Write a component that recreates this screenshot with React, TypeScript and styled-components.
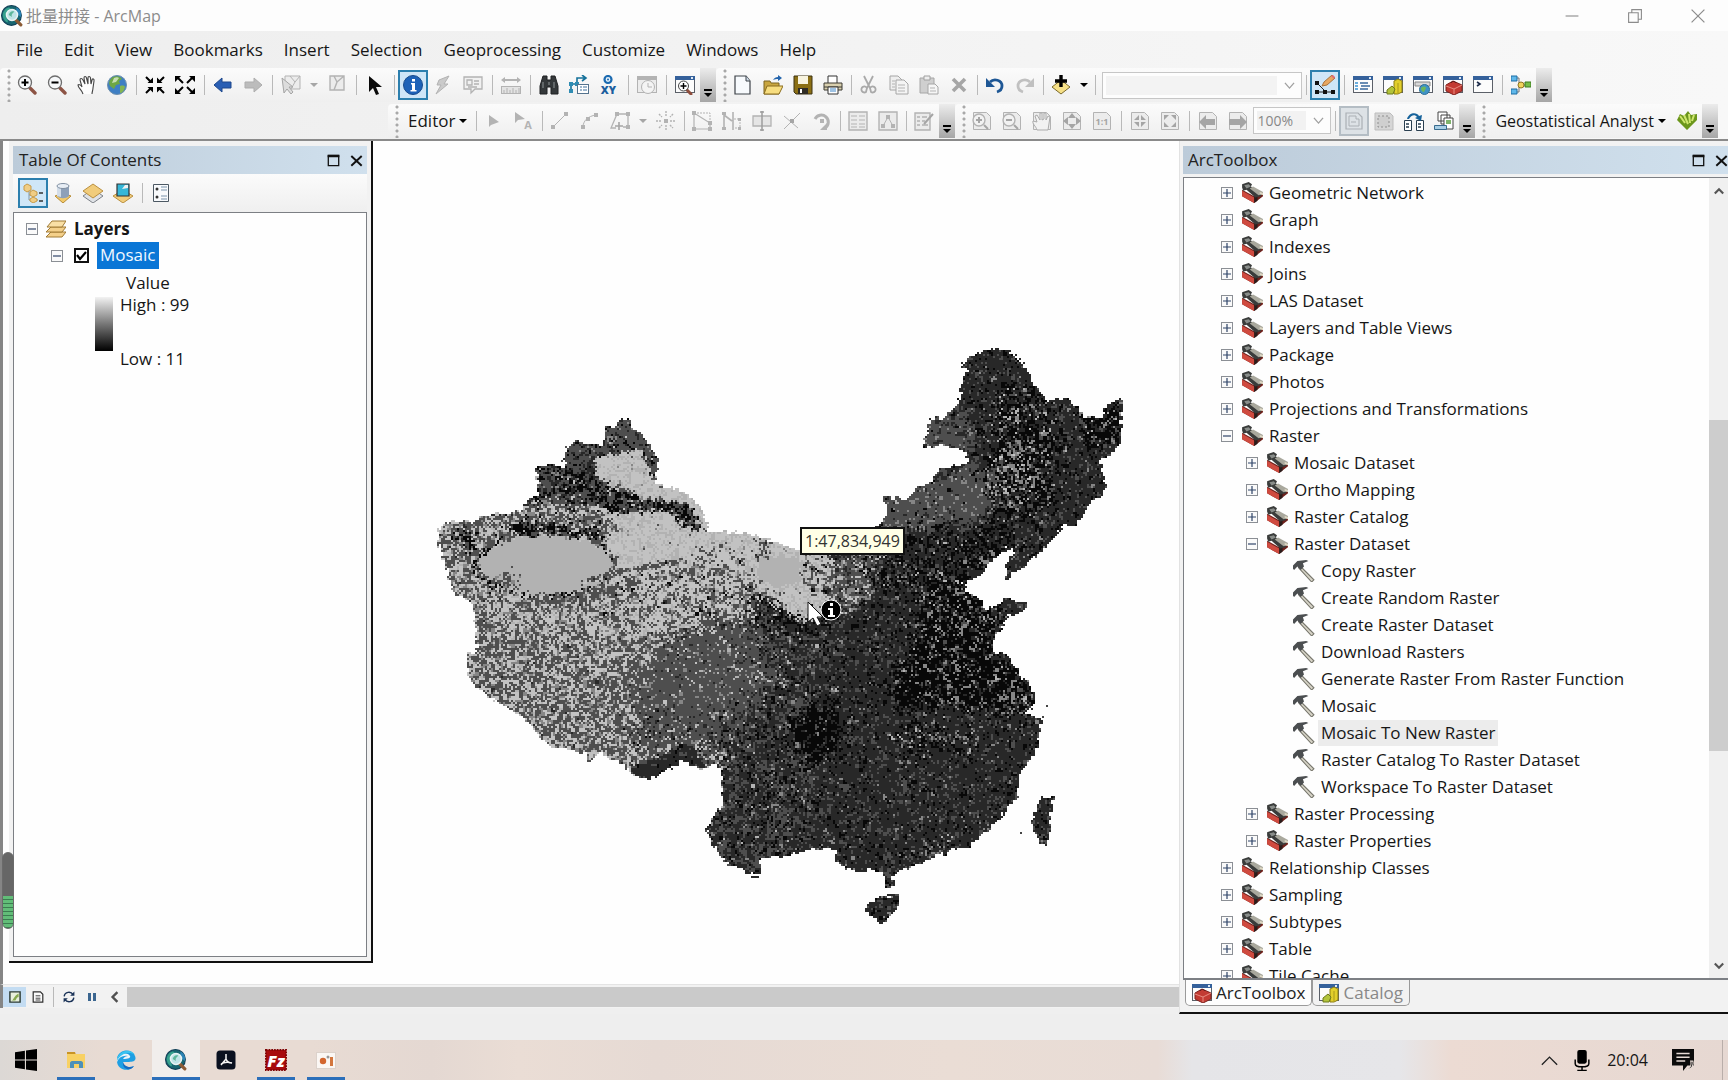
import React from 'react';
import styled, { createGlobalStyle, css } from 'styled-components';

const GlobalStyle = createGlobalStyle`
  *, *::before, *::after { box-sizing: border-box; }
  html, body { margin: 0; padding: 0; }
  body {
    font-family: 'Open Sans', 'Noto Sans', 'Noto Sans CJK SC', sans-serif;
    font-size: 17px;
    line-height: 24px;
    color: #161616;
    background: #efefef;
  }
  button, input, select { font: inherit; color: inherit; }
  button { background: none; border: 0; padding: 0; margin: 0; cursor: default; }
  ul { list-style: none; margin: 0; padding: 0; }
  svg { display: block; flex: none; }
`;

/* ---------- icons ---------- */

const G = '#b3b3b3';

const page = (
  <path d="M3 2h10l4 4v12H3z" fill="#ececec" stroke={G} />
);
const pageWide = (
  <path d="M1.500 1.500h13l4 4v13h-17z" fill="#ececec" stroke={G} />
);
const windowFrame = (
  <>
    <rect x="0.5" y="1.5" width="19" height="16" fill="#fcfcfc" stroke="#5b6068" />
    <rect x="0" y="1" width="20" height="4" fill="#35619b" />
    <path d="M16 2h2v2h-2z" fill="#dfe9f5" />
  </>
);
const lens = (
  <>
    <path d="M13 13l5 5" stroke="#8d5445" strokeWidth="3.4" strokeLinecap="round" />
    <circle cx="8" cy="7.500" r="6.500" fill="#f6f8fa" stroke="#6d6d6d" strokeWidth="1.300" />
  </>
);
const globeLens = (
  <>
    <circle cx="9.500" cy="9.500" r="9" fill="#17656f" stroke="#123f56" />
    <path d="M3 5c3-4 6-3 6-1s-4 3-4 6 2 4 1 6C2 14 0 9 3 5z" fill="#36a08d" />
    <path d="M14 2c4 2 5 6 4 9l-4-3z" fill="#2b83b5" />
    <path d="M13 13l5 5" stroke="#8b5a34" strokeWidth="3" strokeLinecap="round" />
    <circle cx="10" cy="9" r="5" fill="#bfe4e6" stroke="#e9f4f4" strokeWidth="1.400" />
    <path d="M7 9c1-3 3-4 5-3-1 2-3 2-2 5z" fill="#5db79a" />
  </>
);

const icons: Record<string, React.ReactNode> = {
  arcmap: globeLens,
  zoomIn: <>{lens}<path d="M8 4v7M4.500 7.500h7" stroke="#000" strokeWidth="2" /></>,
  zoomOut: <>{lens}<path d="M4.500 7.500h7" stroke="#000" strokeWidth="2" /></>,
  hand: (
    <path d="M6 19c-1-4-5-6-5-9 1-1 3 0 4 2L3 5c0-2 2-2 3 0l2 4-1-6c0-2 2-2 2.500 0l1.500 6V3c0-2 2-2 2.500 0l.5 6 1-4c.5-2 2.500-1 2 1l-1 7c0 2-1 4-1 6" fill="#fdfdfd" stroke="#444" strokeWidth="1.100" />
  ),
  globe: (
    <>
      <circle cx="10" cy="10" r="9.500" fill="#3e7fc4" stroke="#6d8fae" />
      <path d="M6 2c5-2 8 0 9 2l-3 2 1 3-4 1-2 4-4-3c-2-4 0-7 3-9z" fill="#6ea743" />
      <path d="M13 11c3-1 5 0 5 1-1 4-3 6-5 6z" fill="#84b552" />
      <path d="M7 3c2-1 4-1 5 0L9 7 5 8z" fill="#dceccf" opacity=".8" />
    </>
  ),
  zoomInFixed: (
    <>
      <path d="M1 2l5 5M19 2l-5 5M1 18l5-5M19 18l-5-5" stroke="#000" strokeWidth="2" />
      <path d="M8 8H2.500L8 2.500zM12 8h5.500L12 2.500zM8 12H2.500L8 17.500zM12 12h5.500L12 17.500z" />
    </>
  ),
  zoomOutFixed: (
    <>
      <path d="M3 3l5 5M17 3l-5 5M3 17l5-5M17 17l-5-5" stroke="#000" strokeWidth="2" />
      <path d="M0 1h6L0 7zM20 1h-6l6 6zM0 19h6l-6-6zM20 19h-6l6-6z" />
    </>
  ),
  back: <path d="M1 10l8-7v4h9v6H9v4z" fill="#2a5fb4" stroke="#1e488c" />,
  forward: <path d="M19 10l-8-7v4H2v6h9v4z" fill="#bcbcbc" stroke="#adadad" />,
  selectFeatures: (
    <>
      <path d="M4 1h15v13H4zM9 1l5 6-4 7M14 7l5-6" fill="#ececec" stroke={G} />
      <path d="M1 3l2 15 3-4 4 5 2-2-4-5h4z" fill="#dcdcdc" stroke="#a5a5a5" />
    </>
  ),
  clearSelection: <path d="M3 1h14v14H3zM7 1l3 6-3 8M10 7l7-6" fill="#ececec" stroke={G} strokeWidth="1.400" />,
  pointer: <path d="M4 1v16l4-4 3 7 3-1-3-7h6z" fill="#0a0a0a" />,
  info: (
    <>
      <circle cx="10" cy="10" r="9.500" fill="#1d62b8" stroke="#184b8c" />
      <path d="M9 4h3v2.500H9zM8 8h4v7h1.500v1.500H7.500V15H9V9.500H8z" fill="#fff" />
    </>
  ),
  lightning: <path d="M16 1L6 5 4 10h4l-5 9L15 9h-4z" fill="#cacaca" stroke={G} />,
  popup: (
    <>
      <path d="M1 2h18v12h-7l-4 4v-4H1z" fill="#f1f1f1" stroke={G} strokeWidth="1.300" />
      <path d="M4 5h5v5H4zM11 6h5M11 9h5M5 12h9" fill="none" stroke={G} strokeWidth="1.300" />
    </>
  ),
  measure: (
    <>
      <path d="M0 5l4-3v2h12V2l4 3-4 3V6H4v2z" fill={G} />
      <rect x="0.500" y="11.500" width="19" height="7" fill="#e3e3e3" stroke={G} />
      <path d="M3 15v4M6 13v6M9 15v4M12 13v6M15 15v4M18 13v6" stroke={G} />
    </>
  ),
  find: (
    <>
      <path d="M4 1h4v4h4V1h4l3 10v8h-7v-7H8v7H1v-8z" fill="#34383a" stroke="#1f2123" />
      <path d="M4 7v6M15 7v6M10 7v3" stroke="#8d9496" />
    </>
  ),
  route: (
    <>
      <path d="M2 16V9h6V3h8M13 0l4 3-4 3M2 9h4" fill="none" stroke="#15719a" strokeWidth="1.600" />
      <path d="M0 7h4v4H0zM6 7h4v4H6zM0 14h4v4H0z" fill="#2f8cb3" />
      <rect x="8.500" y="9.500" width="11" height="9" fill="#fff" stroke="#55738e" />
      <path d="M11 12h2M14 12h4M11 15h2M14 15h4" stroke="#3d6e9b" />
    </>
  ),
  goXY: (
    <>
      <circle cx="9" cy="4.500" r="3.500" fill="#e7f1fa" stroke="#1b6ab0" strokeWidth="2.200" />
      <circle cx="9" cy="4.500" r="1" fill="#1b6ab0" />
      <text x="9.500" y="19" textAnchor="middle" fontFamily="Open Sans" fontWeight="800" fontSize="11" fill="#1c5e9e">XY</text>
    </>
  ),
  time: (
    <>
      <rect x="0.500" y="1.500" width="19" height="16" fill="#ececec" stroke={G} />
      <path d="M0 1h20v4H0z" fill={G} />
      <circle cx="11" cy="12" r="6.500" fill="#f4f4f4" stroke={G} />
      <path d="M11 8v4h4" fill="none" stroke={G} />
    </>
  ),
  viewer: (
    <>
      {windowFrame}
      <path d="M12 15l4 4" stroke="#8e4d3c" strokeWidth="3" strokeLinecap="round" />
      <circle cx="8.500" cy="11" r="5" fill="#fff" stroke="#454545" />
      <path d="M8.500 8v6M5.500 11h6" stroke="#000" strokeWidth="1.400" />
    </>
  ),
  newDoc: <><path d="M2 1h11l4 5v13H2z" fill="#f7fafd" stroke="#3c4248" strokeWidth="1.200" /><path d="M13 1v5h4" fill="#cfdbe8" stroke="#3c4248" /></>,
  open: (
    <>
      <path d="M1 6h6l1 2h8v11H1z" fill="#c9a640" stroke="#7c6420" />
      <path d="M4 11h16l-4 8H1z" fill="#f7dd7f" stroke="#8a6d1e" />
      <path d="M10 5c1-2 3-3 5-3V0l4 3-4 3V4c-2 0-3 0-5 1z" fill="#2364ac" />
    </>
  ),
  save: (
    <>
      <path d="M1 1h18v18H3l-2-2z" fill="#8b6f14" stroke="#3c3312" />
      <path d="M5 1h10v8H5z" fill="#f7f3df" />
      <path d="M5 13h10v6H5z" fill="#2f2c25" />
      <path d="M7 14h2v4H7z" fill="#fff" />
    </>
  ),
  print: (
    <>
      <path d="M5 1h9v8H5z" fill="#fff" stroke="#333" />
      <path d="M1 8h18v7H1z" fill="#d8cfae" stroke="#3c3a32" />
      <path d="M1 12h18" stroke="#3c3a32" />
      <path d="M5 12h10v7H5z" fill="#fff" stroke="#333" />
      <path d="M7 14h6M7 16h6" stroke="#3f86c8" />
    </>
  ),
  cut: <path d="M5 1l6 12M14 1L8 13M8 13a3 3 0 1 0-1 4zM11 13a3 3 0 1 1 1 4z" fill="none" stroke="#a9a9a9" strokeWidth="1.800" />,
  copy: <><path d="M1 1h8l4 4v10H1z" fill="#efefef" stroke="#a6a6a6" /><path d="M7 5h8l4 4v10H7z" fill="#f4f4f4" stroke="#a6a6a6" /><path d="M9 10h7M9 13h7M9 16h7M3 6h3M3 9h3M3 12h3" stroke={G} /></>,
  paste: <><path d="M1 3h14v15H1z" fill="#cfcfcf" stroke="#a6a6a6" /><path d="M5 1h6v4H5z" fill="#eee" stroke="#a0a0a0" /><path d="M9 9h7l3 3v7H9z" fill="#f6f6f6" stroke="#a6a6a6" /><path d="M11 13h5M11 16h6" stroke={G} /></>,
  remove: <path d="M4 4l12 12M16 4L4 16" stroke="#a6a6a6" strokeWidth="3.600" />,
  undo: (
    <>
      <path d="M5 7c4-4 12-2 12 4 0 3-2 5-5 6" fill="none" stroke="#1e5795" strokeWidth="2.800" />
      <path d="M1 3v9h9z" fill="#1e5795" />
    </>
  ),
  redo: (
    <>
      <path d="M15 7C11 3 3 5 3 11c0 3 2 5 5 6" fill="none" stroke="#c0c0c0" strokeWidth="2.800" />
      <path d="M19 3v9h-9z" fill="#c0c0c0" />
    </>
  ),
  addData: (
    <>
      <path d="M10 5l9 7-9 7-9-7z" fill="#f6e087" stroke="#7a692c" />
      <path d="M10 0v12M4 6h12" stroke="#000" strokeWidth="3.400" />
    </>
  ),
  editorBar: (
    <>
      <path d="M2 8l10 10M2 17h16" fill="none" stroke="#222" strokeWidth="1" />
      <path d="M0 6h4v4H0zM0 15h4v4H0zM8 15h4v4H8zM16 15h4v4h-4z" fill="#111" />
      <path d="M7 11l2-4 8-7 3 3-8 7z" fill="#e8a862" stroke="#a8733c" />
      <path d="M16 1l2-1 2 2-1 2z" fill="#e36d73" />
    </>
  ),
  tocWin: <>{windowFrame}<path d="M2 8h3M2 11h3M2 14h3" stroke="#3c94d2" strokeWidth="1.600" /><path d="M7 8h8M8 11h9M7 14h8" stroke="#37679c" strokeWidth="1.600" /></>,
  catalogWin: (
    <>
      {windowFrame}
      <path d="M11 6l4-2 4 2v11l-4 2h-4z" fill="#e2cf2b" stroke="#8b7d15" />
      <path d="M15 8v10" stroke="#a9981d" />
      <path d="M4 15l5-4 3 3-2 5H4z" fill="#b2c43b" stroke="#6e7a1c" />
    </>
  ),
  searchWin: <>{windowFrame}<path d="M2 7h15v4H2z" fill="#d8d8d8" stroke="#888" /><circle cx="11.500" cy="14.500" r="5" fill="#3f93c6" stroke="#2c6f97" /><path d="M8 13c3-3 5-1 5 0l-2 4c-2 0-3-2-3-4z" fill="#6fb65a" /></>,
  toolboxWin: <>{windowFrame}<path d="M3 10l7-4 9 4v6l-8 4-8-4z" fill="#c33b33" stroke="#7d221e" /><path d="M3 11l8 3 8-4M11 14v5" fill="none" stroke="#e88b80" /><path d="M8 8c1-2 4-2 5 0" fill="none" stroke="#571916" /></>,
  pythonWin: <>{windowFrame}<path d="M4 7l3 2-3 2" fill="none" stroke="#1d2b4a" strokeWidth="1.600" /></>,
  model: (
    <>
      <path d="M5 3h3v14H5M8 10h8" fill="none" stroke="#777" />
      <path d="M0 1h6v5H0zM0 14h6v5H0z" fill="#5fb8ea" stroke="#1c6ca3" />
      <circle cx="10" cy="10" r="3" fill="#f0d35c" stroke="#907522" />
      <path d="M14 7h6v5h-6z" fill="#75bd48" stroke="#3d7a20" />
    </>
  ),
  editTool: <path d="M5 4v12l2-2 8-3z" fill={G} />,
  editAnno: <><path d="M1 1v11l3-3 7-1z" fill={G} /><text x="14" y="18" textAnchor="middle" fontFamily="Open Sans" fontWeight="700" fontSize="11" fill={G}>A</text></>,
  line: <><path d="M3 16L16 3" stroke={G} /><path d="M1 14h4v4H1zM14 1h4v4h-4z" fill={G} /></>,
  arc: <><path d="M3 16c0-6 5-11 13-12" fill="none" stroke={G} /><path d="M1 14h4v4H1zM6 6h4v4H6zM14 2h4v4h-4z" fill={G} /></>,
  trace: <><path d="M7 3h11v13M7 3L1 17h5M13 16h5" fill="none" stroke={G} strokeWidth="1.300" /><path d="M5 1h4v4H5zM16 1h4v4h-4zM16 14h4v4h-4z" fill={G} /><path d="M9 11v8M5 15h8" stroke="#a5a5a5" strokeWidth="1.600" /></>,
  pointTool: <><path d="M8 8h4v4H8z" fill={G} /><path d="M10 0v6M10 14v6M0 10h6M14 10h6M3 3l3 3M14 14l3 3M17 3l-3 3M3 17l3-3" stroke={G} strokeWidth="1.400" strokeDasharray="2 1" /></>,
  editVertices: <><path d="M2 2v16h16V12L2 2" fill="none" stroke={G} strokeWidth="1.200" /><path d="M2 2h16v10" fill="none" stroke={G} strokeDasharray="2 1" /><path d="M0 0h4v4H0zM0 16h4v4H0zM16 16h4v4h-4zM16 10h4v4h-4z" fill={G} /></>,
  reshape: <><path d="M2 2v16M2 4l8 6M11 1v18" fill="none" stroke={G} strokeWidth="1.600" /><path d="M0 1h4v3H0zM0 16h4v3H0zM16 7h3v3h-3zM16 16h3v3h-3z" fill={G} /><path d="M12 8h6v9h-6" fill="none" stroke={G} strokeDasharray="2 1" /></>,
  cutPoly: <><path d="M1 5h18v10H1z" fill="#e5e5e5" stroke={G} strokeWidth="1.300" /><path d="M10 0v20M8 1h4M8 19h4" stroke="#9d9d9d" strokeWidth="1.500" /></>,
  split: <><path d="M2 18L18 2M2 5l14 12" stroke={G} /><path d="M8 8h4v4H8z" fill="#a5a5a5" /></>,
  rotate: <><path d="M3 8a7 7 0 1 1 10 9" fill="none" stroke={G} strokeWidth="3" /><path d="M15 12v7H8z" fill={G} /><path d="M8 8h4v4H8z" fill={G} /></>,
  attributes: <><path d="M1 1h18v18H1z" fill="#ebebeb" stroke={G} strokeWidth="1.400" /><path d="M3 5h6M3 9h6M3 13h6M3 16h6M11 5h6M11 9h6M11 13h6M11 16h6" stroke={G} /></>,
  sketchProps: <><path d="M1 1h18v18H1z" fill="#ebebeb" stroke={G} strokeWidth="1.400" /><path d="M5 15l5-9 5 9" fill="none" stroke={G} /><path d="M3 13h4v4H3zM8 4h4v4H8zM13 13h4v4h-4z" fill={G} /></>,
  createFeatures: <><path d="M1 2h15v17H1z" fill="#ebebeb" stroke={G} strokeWidth="1.400" /><path d="M3 6h3M3 10h3M3 14h3M8 6h5M8 10h3M8 14h6" stroke={G} strokeWidth="1.600" /><path d="M10 13l9-10" stroke="#a5a5a5" strokeWidth="2" /></>,
  pageZoomIn: <>{pageWide}<circle cx="7" cy="9" r="6" fill="#f2f2f2" stroke={G} strokeWidth="1.400" /><path d="M7 6v6M4 9h6M12 14l4 4" stroke="#a5a5a5" strokeWidth="2" /></>,
  pageZoomOut: <>{pageWide}<circle cx="7" cy="9" r="6" fill="#f2f2f2" stroke={G} strokeWidth="1.400" /><path d="M4 9h6M12 14l4 4" stroke="#a5a5a5" strokeWidth="2" /></>,
  pagePan: <>{pageWide}<path d="M5 19c-1-4-5-6-4-9l4 1-2-6 2-1 3 5V2h2v7l2-1V2h2v7l2-4 2 1-2 13z" fill="#f2f2f2" stroke="#ababab" /></>,
  pageFull: <>{pageWide}<path d="M10 2l4 5H6zM10 18l4-5H6zM1 10l5-4v8zM19 10l-5-4v8z" fill="#a5a5a5" /></>,
  pageOne: <>{pageWide}<text x="10" y="14" textAnchor="middle" fontFamily="Open Sans" fontWeight="700" fontSize="9" fill="#a5a5a5">1:1</text></>,
  pageIn: <>{pageWide}<path d="M9 9H4l5-5zM11 9h5l-5-5zM9 11H4l5 5zM11 11h5l-5 5z" fill="#a5a5a5" /></>,
  pageOut: <>{pageWide}<path d="M4 4h5L4 9zM16 4h-5l5 5zM4 16h5l-5-5zM16 16h-5l5-5z" fill="#a5a5a5" /></>,
  pageBack: <>{pageWide}<path d="M1 11l7-7v4h9v6H8v4z" fill="#a5a5a5" /></>,
  pageForward: <>{pageWide}<path d="M19 11l-7-7v4H1v6h11v4z" fill="#a5a5a5" /></>,
  draft: <><path d="M2 2h12l4 4v12H2z" fill="#dde2e6" stroke="#abb0b5" strokeWidth="1.200" /><path d="M5 5h7v3h3v7H5zM7 11h5" fill="none" stroke="#abb0b5" /></>,
  focus: <><path d="M1 2h15l3 3v14H1z" fill="#d6d6d6" stroke="#bdbdbd" /><path d="M4 5h11v11H4z" fill="#cfcfcf" stroke="#8f8f8f" strokeDasharray="2 2" /></>,
  changeLayout: (
    <>
      <path d="M0.500 9.500h7v10h-7zM12.500 9.500h7v10h-7z" fill="#fff" stroke="#2a3f50" />
      <path d="M2 13h3M2 16h3M14 13h3M14 16h3" stroke="#2a3f50" strokeWidth="1.500" />
      <path d="M3 8c2-7 10-7 12-3l3-1-1 6-6-3 2-1c-2-3-6-2-8 2z" fill="#17639b" />
    </>
  ),
  dataDriven: (
    <>
      <path d="M4 1h9v9H4zM7 4h9v9H7z" fill="#fff" stroke="#444" />
      <path d="M10 7h9v11h-9z" fill="#fff" stroke="#444" />
      <path d="M12 9h5v4h-5z" fill="#7fb36c" />
      <path d="M0.500 14.500h12v4h-12z" fill="#a9cfe6" stroke="#386b8d" />
    </>
  ),
  geostat: <><path d="M10 19L0 9l3-6 4 2 4-5 3 4 6-1v6z" fill="#6b961b" /><path d="M3 5l5 7M7 4l4 9M12 3l1 9M17 4l-2 6" fill="none" stroke="#cfe66d" strokeWidth="2" /></>,
  listDrawing: (
    <>
      <path d="M6 8v9h9M6 12h4" fill="none" stroke="#8297a6" />
      <path d="M4 1l4 2v4L4 9 1 7V3z" fill="#f0cd85" stroke="#c79a48" />
      <path d="M10 7l4 2v3l-4 2-3-2V9zM10 14l4 2v2l-4 2-3-2v-2z" fill="#f0cd85" stroke="#c79a48" />
      <path d="M16 10h4M16 18h4" stroke="#333" strokeWidth="1.500" />
    </>
  ),
  listSource: <><path d="M2 13l8-3 8 3-8 7z" fill="#f2c96a" stroke="#b78c37" /><path d="M4 3h12v10c-3 3-9 3-12 0z" fill="#8da0b8" /><path d="M4 3h4v11l-4-1z" fill="#d3dde8" /><ellipse cx="10" cy="3" rx="6" ry="2.500" fill="#e8eef5" stroke="#7f8ea0" /></>,
  listVisible: <><path d="M0 13l10-7 10 7-10 7z" fill="#dfe2e6" stroke="#7c8188" /><path d="M0 8l10-7 10 7-10 7z" fill="#f1cc7b" stroke="#b98f3f" /></>,
  listSelection: <><path d="M0 13l10-6 10 6-10 7z" fill="#f1cc7b" stroke="#b98f3f" /><path d="M4 1h12v12H4z" fill="#35b7d8" stroke="#333" strokeWidth="1.200" /><path d="M9 6l3-4h3v3z" fill="#f1f1f1" /></>,
  options: <><path d="M2.500 1.500h15v17h-15z" fill="#f8fafc" stroke="#4c5863" /><circle cx="6" cy="6" r="1.500" fill="#333" /><circle cx="6" cy="14" r="1.500" fill="#333" /><path d="M10 4h6M10 7h6M10 13h6M10 16h6" stroke="#7b93ab" /></>,
  layers: (
    <>
      <path d="M0 18l5-5h15l-4 5z" fill="#f4d08a" stroke="#a07a35" />
      <path d="M0 13l5-5h15l-4 5z" fill="#f4d08a" stroke="#a07a35" />
      <path d="M1 8l5-6h14l-4 6z" fill="#f9dfa5" stroke="#a07a35" />
    </>
  ),
  toolset: (
    <>
      <path d="M1 7l11 6 8-3v3l-8 6L1 13z" fill="#6f211c" />
      <path d="M1 8l11 6v5L1 13z" fill="#cf4a3f" />
      <path d="M12 12l3-1v6l-3 2z" fill="#2b1c1a" />
      <path d="M1 2l6-2 3 2-1 2 10 6-1 3-5 1L5 7 2 8 1 5z" fill="#3a3c3b" />
      <path d="M3 3l4-1 2 2-4 2z" fill="#898d8a" />
      <path d="M8 6l3-2 9 5v2l-4 1z" fill="#a9a89d" />
      <path d="M17 9l3 1v2l-3-1z" fill="#ded8c4" />
    </>
  ),
  tool: (
    <>
      <path d="M6 5l13 13-2 2L5 7z" fill="#d8d5c8" stroke="#77766c" />
      <path d="M0 5l4-4 8-1 2 1-5 2 1 3-3 3-3-3-3 3-1-1z" fill="#4b4e50" />
    </>
  ),
  dataView: <><path d="M1.500 1.500h17v17h-17z" fill="#e7efdc" stroke="#2c3b33" strokeWidth="2.400" /><path d="M4 16C8 15 8 8 16 4v6c-4 0-4 6-6 6z" fill="#86a84f" /></>,
  layoutView: <><path d="M2 1.500h12l4 4v13H2z" fill="#fafafa" stroke="#303030" strokeWidth="2" /><path d="M6 8h8M6 12h8M6 15h8" stroke="#303030" strokeWidth="1.500" /></>,
  refresh: <><path d="M2 9c1-8 11-9 15-3M18 11c-1 8-11 9-15 3" fill="none" stroke="#1b3358" strokeWidth="2.400" /><path d="M19 1v7h-7zM1 19v-7h7z" fill="#1b3358" /></>,
  pause: <path d="M2 2h6v16H2zM12 2h6v16h-6z" fill="#3b6690" />,
  chevLeft: <path d="M14 2L6 10l8 8" fill="none" stroke="#505050" strokeWidth="4" />,
  chevUp: <path d="M3 14l7-7 7 7" fill="none" stroke="#555" strokeWidth="3.600" />,
  chevDown: <path d="M3 6l7 7 7-7" fill="none" stroke="#555" strokeWidth="3.600" />,
  chevThinDown: <path d="M3 6l7 8 7-8" fill="none" stroke="#a0a0a0" strokeWidth="2" />,
  chevTray: <path d="M1 15l9-9 9 9" fill="none" stroke="#222" strokeWidth="1.600" />,
  winMin: <path d="M2 10h16" stroke="#8c8c8c" strokeWidth="1.400" />,
  winRestore: <path d="M2 6h12v12H2zM6 6V2h12v12h-4" fill="none" stroke="#8c8c8c" strokeWidth="1.400" />,
  winClose: <path d="M2 2l16 16M18 2L2 18" stroke="#8c8c8c" strokeWidth="1.500" />,
  paneMax: <><path d="M2 3h16v15H2z" fill="none" stroke="#111" strokeWidth="2" /><path d="M1 1h18v4H1z" fill="#111" /></>,
  paneClose: <path d="M2 3l16 15M18 3L2 18" stroke="#111" strokeWidth="3" />,
  start: <path d="M0 3l9-1.500V9.500H0zM10 1.300L20 0v9.500H10zM0 10.500h9v8L0 17zM10 10.500h10V20l-10-1.400z" fill="#000" />,
  explorer: <><path d="M1 2h8l1 3H1z" fill="#c99425" /><path d="M1 4h18v14H1z" fill="#f8d164" /><path d="M4 18v-5c0-1 1-2 2-2h9c1 0 2 1 2 2v5h-4v-4H8v4z" fill="#4c90b9" /></>,
  edge: (
    <>
      <path d="M1 8C3-1 16-2 19 6c2 5-2 6-6 6H7c1 5 7 6 11 4-5 7-17 4-17-5z" fill="#1f9fe3" />
      <path d="M1 9C4 3 11 2 14 6c1 2-2 3-7 3 1-2 3-3 5-3C7 5 3 7 1 12z" fill="#eef3f7" />
      <path d="M1 11c0-3 1-6 4-8 5-4 12-2 14 2C14 1 5 3 1 11z" fill="#38c3f0" />
      <path d="M7 12c1 5 7 6 11 4-4 6-12 3-11-4z" fill="#1769c0" />
    </>
  ),
  acrobat: <><rect x="0.500" y="0.500" width="19" height="19" rx="3.500" fill="#0a1120" /><path d="M10 4v5l-5 6M10 9c1 3 3 4 6 4M5 14c3-2 7-2 11-1" fill="none" stroke="#f4f4f4" strokeWidth="1.500" /></>,
  filezilla: <><rect x="0.750" y="0.750" width="18.500" height="18.500" fill="#a80b0d" stroke="#7d0506" strokeWidth="1.500" strokeDasharray="1.500 1" /><text x="10" y="16" textAnchor="middle" fontFamily="Open Sans" fontStyle="italic" fontWeight="800" fontSize="15" fill="#fff">Fz</text></>,
  recorder: <><rect x="0.500" y="2.500" width="19" height="16" fill="#fbf7f4" stroke="#dcd2cb" /><circle cx="7" cy="11" r="3.200" fill="#d3662e" /><circle cx="12" cy="7" r="1.500" fill="#999" /><rect x="14" y="7" width="3" height="9" fill="#d3773f" /></>,
  mic: <><rect x="6" y="0" width="9" height="13" rx="2" fill="#000" /><path d="M4 9v4c0 4 13 4 13 0V9M10.500 16v3M6 19.500h9" fill="none" stroke="#000" strokeWidth="1.400" /></>,
  notify: <><path d="M0 0h20v15h-6l-4 5v-5H0z" fill="#0b0b0b" /><path d="M4 4h12M4 7.500h12M4 11h8" stroke="#e8dcd6" strokeWidth="1.400" /><path d="M19 11c1 5-2 8-6 8 3-1 5-4 4-8z" fill="#0b0b0b" stroke="#e8dcd6" /></>,
};

const Icon = ({ name, size = 20 }: { name: string; size?: number }) => (
  <svg width={size} height={size} viewBox="0 0 20 20" fill="none" aria-hidden="true">
    <g fill="#000">{icons[name]}</g>
  </svg>
);

/* ---------- frame ---------- */

const Window = styled.div`
  display: flex;
  flex-direction: column;
  min-height: 100vh;
  overflow: hidden;
`;

const TitleBar = styled.header`
  display: flex;
  align-items: center;
  height: 31px;
  padding-left: 1px;
  gap: 3px;
  background: #fdfdfd;
  color: #8c8c8c;
  font-size: 16px;
`;

const TitleText = styled.h1`
  flex: 1;
  margin: 0;
  font: inherit;
`;

const CaptionButton = styled.button`
  display: grid;
  place-items: center;
  width: 60px;
  height: 31px;
`;

const MenuBar = styled.nav`
  display: flex;
  align-items: center;
  height: 37px;
  padding-left: 6px;
  gap: 1px;
  background: linear-gradient(90deg, #eeeeee, #f8f8f8);
`;

const MenuButton = styled.button`
  padding: 0 10px;
`;

const ToolRow = styled.div<{ $indent?: boolean }>`
  display: flex;
  align-items: center;
  height: ${(p) => (p.$indent ? 37 : 34)}px;
  padding-left: ${(p) => (p.$indent ? 388 : 0)}px;
  background: linear-gradient(90deg, #eeeeee, #f8f8f8);
  overflow: hidden;
`;

const ToolBar = styled.div`
  display: flex;
  flex: none;
  align-items: center;
  height: 34px;
  padding-left: 12px;
  border-radius: 4px 0 0 4px;
  background:
    radial-gradient(circle, #a8a8a8 1px, transparent 2px) 7px 6px / 4px 6px repeat-y,
    linear-gradient(#fbfbfb, #efefef);
`;

const ToolButton = styled.button<{ $on?: boolean; $muted?: boolean }>`
  display: grid;
  place-items: center;
  width: 30px;
  height: 30px;
  ${(p) => p.$on && css`background: #cfe6f7; border: 2px solid #2c7fae;`}
  ${(p) => p.$muted && css`background: #dde2e6; border: 2px solid #b4bdc4;`}
`;

const Sep = styled.span<{ $tight?: boolean }>`
  flex: none;
  width: ${(p) => (p.$tight ? 6 : 8)}px;
  height: 20px;
  background: linear-gradient(#b9b9b9, #b9b9b9) center / 1px 100% no-repeat;
`;

const Caret = styled.span<{ $dim?: boolean }>`
  display: inline-block;
  border: 4px solid transparent;
  border-top-color: ${(p) => (p.$dim ? '#a6a6a6' : '#000')};
  border-bottom: 0;
`;

const DropButton = styled.button`
  display: grid;
  place-items: center;
  width: 16px;
  height: 30px;
`;

const WordButton = styled.button`
  display: flex;
  align-items: center;
  gap: 4px;
  padding: 0 6px 0 8px;
  font-size: 17px;
`;

const AnalystButton = styled(WordButton)`
  font-size: 16px;
`;

const More = styled.button`
  display: flex;
  flex-direction: column;
  align-items: center;
  justify-content: flex-end;
  gap: 2px;
  width: 16px;
  height: 34px;
  padding-bottom: 5px;
  background: linear-gradient(#ececec, #a6a6a6);
  &::before {
    content: '';
    width: 8px;
    height: 2px;
    background: #000;
  }
`;

const Combo = styled.label<{ $wide?: boolean }>`
  display: grid;
  align-items: center;
  width: ${(p) => (p.$wide ? 200 : 78)}px;
  height: 27px;
  margin-left: ${(p) => (p.$wide ? 4 : 0)}px;
  border: 1px solid #c6c6c6;
  background: #fdfdfd;
  > * { grid-area: 1 / 1; }
  > svg { justify-self: end; margin-right: 5px; pointer-events: none; }
`;

const Select = styled.select`
  appearance: none;
  justify-self: stretch;
  height: 19px;
  margin: 0 24px 0 3px;
  padding: 0;
  border: 0;
  background: #eeeeee;
  color: #555;
  font-size: 14px;
  line-height: 19px;
`;

/* ---------- workspace ---------- */

const Workspace = styled.main`
  display: flex;
  flex: 1;
  min-height: 0;
  border-top: 2px solid #8a8a8a;
`;

const LeftSide = styled.section`
  display: flex;
  flex: 1;
  flex-direction: column;
  min-width: 0;
  padding-bottom: 6px;
  background: #efefef;
`;

const DataFrame = styled.div`
  position: relative;
  display: flex;
  flex: 1;
  min-height: 0;
  border-left: 3px solid #858585;
  background: #fefefe;
`;

const TocPane = styled.aside`
  display: flex;
  flex: none;
  flex-direction: column;
  width: 364px;
  margin: 0 0 21px 6px;
  padding: 5px 4px 4px 4px;
  border-right: 2px solid #111;
  border-bottom: 2px solid #111;
  background: #f2f2f2;
`;

const PaneHead = styled.div`
  display: flex;
  align-items: center;
  height: 28px;
  padding: 0 4px 0 6px;
  gap: 10px;
  background: linear-gradient(90deg, #bccbd9, #d0e0ed);
`;

const ToolboxHead = styled(PaneHead)`
  padding: 0 0 0 5px;
`;

const PaneTitle = styled.h2`
  flex: 1;
  margin: 0;
  font-size: 17px;
  font-weight: 400;
  color: #222;
`;

const TocTools = styled.div`
  display: flex;
  align-items: center;
  height: 38px;
  padding-left: 5px;
  background: linear-gradient(#fbfbfb, #efefef);
`;

const TocTree = styled.div`
  flex: 1;
  border: 1px solid #7c7f84;
  background: #fefefe;
  padding-top: 2px;
`;

const TocRow = styled.div<{ $indent: number }>`
  display: flex;
  align-items: center;
  height: 27px;
  padding-left: ${(p) => p.$indent}px;
`;

const Expander = styled.button`
  display: grid;
  place-items: center;
  flex: none;
  width: 12px;
  height: 12px;
  border: 1px solid #8b8f95;
  background: #fafafa;
`;

const LayersName = styled.strong`
  margin-left: 8px;
`;

const LayersIconBox = styled.span`
  margin-left: 8px;
`;

const CheckWrap = styled.span`
  display: grid;
  place-items: center;
  margin-left: 11px;
  > * { grid-area: 1 / 1; }
  > svg { pointer-events: none; }
`;

const Check = styled.input`
  appearance: none;
  width: 15px;
  height: 15px;
  margin: 0;
  border: 2px solid #111;
  background: #fff;
`;

const LayerName = styled.label`
  margin-left: 8px;
  padding: 1px 3px 2px;
  background: #0a76d6;
  color: #f2f8ff;
`;

const Legend = styled.div`
  display: flex;
  gap: 7px;
  margin-top: -3px;
  padding-left: 81px;
`;

const Ramp = styled.span`
  width: 18px;
  height: 54px;
  margin-top: 4px;
  background: linear-gradient(#f2f2f2, #777 50%, #000);
`;

const LegendText = styled.div`
  display: flex;
  flex-direction: column;
  justify-content: space-between;
  height: 78px;
`;

const MicMeter = styled.div`
  position: absolute;
  left: -1px;
  bottom: 55px;
  width: 12px;
  height: 77px;
  border: 1px solid #6a6a6a;
  border-radius: 6px;
  background:
    repeating-linear-gradient(transparent 0 3px, #3b7d50 3px 4px) 0 43px no-repeat,
    linear-gradient(#666 0 43px, #62bd78 43px);
`;

const MapView = styled.figure`
  position: relative;
  flex: 1;
  min-width: 0;
  margin: 0;
`;

const MapSvg = styled.svg`
  width: 100%;
  height: 100%;
`;

const ScaleTip = styled.div`
  position: absolute;
  left: 427px;
  top: 386px;
  padding: 0 3px;
  border: 2px solid #111;
  background: #ffffe6;
  font-size: 16px;
  color: #333;
`;

const Cursor = styled.svg`
  position: absolute;
  left: 434px;
  top: 458px;
`;

const ViewBar = styled.div`
  display: flex;
  align-items: center;
  height: 24px;
  border-top: 1px solid #e4e4e4;
  border-left: 3px solid #858585;
  background: #f2f2f2;
`;

const ViewButton = styled.button<{ $on?: boolean }>`
  display: grid;
  place-items: center;
  width: 23px;
  height: 20px;
  background: ${(p) => (p.$on ? '#c3dcf2' : 'transparent')};
`;

const HTrack = styled.div`
  flex: 1;
  height: 20px;
  margin-left: 1px;
  background: #cacaca;
`;

/* ---------- toolbox ---------- */

const ToolboxPane = styled.aside`
  display: flex;
  flex: none;
  flex-direction: column;
  width: 549px;
  padding: 5px 0 6px 3px;
  border-left: 1px solid #e2e2e2;
  border-bottom: 2px solid #111;
  background: #f2f2f2;
`;

const TreeBox = styled.div`
  display: flex;
  height: 803px;
  margin-top: 3px;
  border: solid #7c7f84;
  border-width: 1px 0 2px 1px;
  background: #fefefe;
  overflow: hidden;
`;

const Tree = styled.ul`
  flex: 1;
  padding-top: 1px;
`;

const TreeRow = styled.li<{ $level: number }>`
  display: flex;
  align-items: center;
  height: 27px;
  padding-left: ${(p) => [37, 62, 109][p.$level]}px;
`;

const RowIcon = styled.span<{ $leaf?: boolean }>`
  margin-left: ${(p) => (p.$leaf ? 0 : 8)}px;
`;

const RowLabel = styled.span<{ $hot?: boolean }>`
  margin-left: 3px;
  padding: 1px 3px;
  background: ${(p) => (p.$hot ? '#ececec' : 'transparent')};
`;

const VScroll = styled.div`
  display: flex;
  flex-direction: column;
  align-items: center;
  width: 19px;
  background: #f0f0f0;
`;

const ScrollButton = styled.button`
  display: grid;
  place-items: center;
  width: 19px;
  height: 25px;
`;

const Thumb = styled.div`
  width: 100%;
  height: 331px;
  margin-top: 217px;
  margin-bottom: auto;
  background: #cdcdcd;
`;

const Tabs = styled.div`
  display: flex;
  padding-left: 2px;
`;

const Tab = styled.button<{ $active?: boolean }>`
  display: flex;
  align-items: center;
  height: 26px;
  padding: 0 6px;
  gap: 4px;
  border: 1px solid #9a9a9a;
  border-top: 0;
  border-radius: 0 0 5px 5px;
  background: ${(p) => (p.$active ? '#fdfdfd' : '#f2f2f2')};
  color: ${(p) => (p.$active ? '#222' : '#888')};
`;

const StatusBar = styled.footer`
  height: 26px;
  background: #eeeeee;
`;

/* ---------- taskbar ---------- */

const TaskBar = styled.footer`
  display: flex;
  align-items: stretch;
  height: 40px;
  background: linear-gradient(90deg, #dcd8d5, #e8dbd3 6%, #e8dbd3 18%, #e4d8d2 25%, #eaddd5 30%, #e6dad4 38%, #eaddd5 55%, #e8dcd6 67%, #e5e5e8 69%, #e6e6e9 81%, #ecdbd3 84%, #e6d8d2);
`;

const TaskButton = styled.button<{ $open?: boolean; $active?: boolean }>`
  display: flex;
  align-items: center;
  justify-content: center;
  width: 50px;
  background:
    ${(p) => (p.$open || p.$active ? 'linear-gradient(#2b6fba, #2b6fba)' : 'linear-gradient(transparent, transparent)')} bottom center / ${(p) => (p.$active ? '48px' : '38px')} 3px no-repeat,
    ${(p) => (p.$active ? 'linear-gradient(#f1eeec, #f1eeec)' : 'linear-gradient(transparent, transparent)')} center / 48px 100% no-repeat;
`;

const TaskButtons = styled.div`
  display: flex;
  padding-left: 1px;
`;

const Tray = styled.div`
  display: flex;
  align-items: center;
  margin-left: auto;
  padding-right: 4px;
`;

const TrayButton = styled.button<{ $wide?: boolean }>`
  display: grid;
  place-items: center;
  width: ${(p) => (p.$wide ? 70 : 32)}px;
  height: 40px;
`;

const Clock = styled.time`
  padding-left: 10px;
  font-size: 16px;
`;

const ShowDesktop = styled.button`
  width: 6px;
  border-left: 1px solid #b9aeaa;
`;

/* ---------- raster ---------- */

type Pt = [number, number];
const pts = (s: string): Pt[] => s.split(' ').map((p) => p.split(',').map(Number) as Pt);

const mainland = pts(
  '437,529 448,521 468,518 470,523 483,515 520,510 528,500 538,493 536,464 558,464 566,466 563,457 568,444 575,439 590,445 603,445 605,427 616,424 620,416 632,419 632,426 640,433 653,447 658,460 655,482 683,490 702,508 710,530 737,532 760,535 800,550 840,545 877,525 887,514 883,496 907,498 917,487 933,481 940,468 970,460 963,448 940,445 923,447 930,417 943,417 958,403 967,368 960,365 970,355 990,348 1013,351 1023,361 1033,380 1045,399 1067,397 1079,407 1083,417 1102,416 1107,405 1122,397 1120,445 1100,460 1106,483 1103,496 1092,498 1078,523 1063,525 1040,552 1013,573 1006,580 1006,563 1014,548 1007,547 992,561 980,575 963,583 968,594 982,598 987,611 1003,598 1027,602 1025,609 1010,615 993,640 995,651 1007,655 1020,674 1035,692 1035,705 1023,713 1042,718 1037,747 1020,774 1018,795 997,820 973,843 940,854 900,870 893,872 894,886 885,886 883,872 867,869 850,870 835,860 837,849 813,847 803,852 760,858 762,875 753,875 740,868 725,862 705,829 722,804 722,775 717,762 700,768 683,760 653,777 632,776 623,763 600,752 588,763 587,753 550,745 533,730 520,713 490,698 467,677 467,652 477,653 475,623 472,603 453,592 445,563 438,542'
);
const islands = [
  pts('867,904 880,896 902,893 893,914 882,921 867,915'),
  pts('1042,796 1053,796 1050,827 1045,847 1032,831 1032,820'),
];

const grays = ['#080808', '#282828', '#4e4e4e', '#868686', '#b2b2b2', '#c2c2c2'];

/* Share of each gray, darkest first. */
type Mix = number[];
type Patch = { shape: Pt[]; mix: Mix; soft: number };
const patch = (s: string, mix: Mix, soft = 8): Patch => ({ shape: pts(s), mix, soft });
const oval = (cx: number, cy: number, rx: number, ry: number, mix: Mix, soft = 8): Patch => ({
  shape: Array.from({ length: 20 }, (_, i) => {
    const a = (i / 10) * Math.PI;
    return [cx + rx * Math.cos(a), cy + ry * Math.sin(a)] as Pt;
  }),
  mix,
  soft,
});

const base: Mix = [10, 71, 16, 2, 0, 0];
const light: Mix = [0, 0, 1, 2, 30, 67];
const sand: Mix = [0, 0, 0, 0, 100, 0];
const black: Mix = [78, 16, 4, 2, 0, 0];

const patches: Patch[] = [
  patch('420,500 800,540 790,640 730,690 715,800 560,800 420,720', [0, 1, 46, 14, 8, 31], 22),
  patch('680,590 790,620 790,700 760,860 700,860 715,740 640,760 650,680', [3, 22, 65, 6, 2, 2], 30),
  patch('725,600 830,630 800,870 705,870 722,760', [10, 50, 36, 3, 1, 0], 26),
  patch('660,650 750,620 775,680 740,720 650,720 620,690', [0, 4, 82, 8, 3, 3], 24),
  patch('480,600 700,600 710,625 640,640 500,625', [0, 0, 28, 12, 14, 46], 16),
  patch('630,770 690,742 706,764 650,782', [6, 86, 8, 0, 0, 0], 4),
  patch('437,515 620,500 620,620 540,610 470,600 435,550', [1, 1, 44, 14, 10, 30], 10),
  patch('590,500 640,470 700,485 720,525 800,535 850,570 830,612 795,622 745,575 700,558 610,580 500,600 520,585 600,560', light, 7),
  patch('640,570 745,570 790,612 740,620 620,600', [2, 2, 30, 10, 8, 48], 12),
  patch('690,545 750,545 740,568 690,562', [1, 0, 20, 5, 20, 54], 6),
  patch('536,460 562,460 600,490 560,506 528,506', [22, 24, 42, 6, 2, 4], 4),
  patch('566,440 605,444 608,420 635,416 662,460 656,482 640,462 600,450 575,475 560,468', [8, 16, 70, 4, 1, 1], 4),
  patch('592,458 640,448 655,480 665,500 635,500 598,478', light, 4),
  patch('556,460 575,470 600,480 650,498 690,503 705,528 685,528 670,512 620,512 585,500 560,486', [34, 12, 46, 4, 2, 2], 5),
  patch('515,504 560,500 600,508 620,528 600,540 520,532', [6, 4, 50, 10, 6, 24], 6),
  patch('510,524 520,518 560,526 598,528 594,538 560,534 515,536', [62, 8, 24, 0, 2, 4], 5),
  patch('455,528 478,536 476,552 460,545', [48, 12, 30, 4, 2, 4], 6),
  oval(544, 563, 74, 34, [18, 4, 40, 8, 10, 20], 5),
  oval(546, 564, 67, 29, sand, 3),
  patch('488,578 512,568 524,588 505,588', [0, 0, 46, 10, 44, 0], 6),
  patch('515,602 580,594 600,588 640,580 640,584 580,600 515,607', [0, 0, 78, 10, 4, 8], 2),
  patch('580,580 620,568 680,558 680,562 620,573 582,584', [4, 4, 62, 10, 0, 20], 2),
  patch('755,540 772,542 768,568 758,562', [0, 5, 50, 10, 15, 20], 5),
  oval(782, 570, 25, 16, sand, 4),
  patch('750,590 790,612 815,628 775,642 745,606', [24, 44, 24, 5, 2, 1], 10),
  patch('800,555 832,560 838,590 812,600 804,580', [3, 3, 34, 10, 14, 36], 7),
  patch('838,560 880,548 886,576 866,600 828,618 828,585', [5, 8, 52, 18, 8, 9], 9),
  patch('870,520 885,495 935,480 970,462 1000,480 980,520 900,535', [1, 3, 82, 12, 2, 0], 10),
  patch('922,415 965,405 980,440 965,450 920,447', [1, 18, 72, 9, 0, 0], 8),
  patch('1000,385 1045,395 1060,440 1050,510 1000,520 985,480 995,430', [48, 28, 11, 9, 3, 1], 14),
  patch('985,460 1030,435 1035,490 995,500', [34, 18, 14, 22, 10, 2], 12),
  patch('1078,415 1105,412 1122,395 1120,440 1090,450', [66, 18, 8, 6, 2, 0], 6),
  patch('960,540 1000,515 1020,545 985,575 950,582', [44, 42, 10, 4, 0, 0], 12),
  patch('880,535 950,520 960,570 900,600 870,580', [34, 46, 15, 4, 1, 0], 16),
  patch('930,575 985,590 1000,605 990,645 1030,690 1000,715 930,705 900,690 915,640', [64, 14, 9, 12, 1, 0], 14),
  patch('895,660 930,690 910,710 890,700', black, 12),
  oval(816, 732, 27, 28, [78, 16, 4, 2, 0, 0], 14),
  oval(922, 735, 24, 20, [26, 46, 12, 12, 4, 0], 12),
  oval(962, 742, 12, 14, [20, 50, 12, 14, 4, 0], 10),
  patch('1000,690 1034,692 1030,712 1005,712', [38, 20, 16, 22, 4, 0], 6),
  oval(780, 680, 8, 5, [0, 10, 34, 32, 24, 0], 4),
  patch('925,838 950,836 940,856 922,852', [16, 34, 22, 22, 6, 0], 5),
];

const hash = (x: number, y: number, seed: number) => {
  let h = Math.imul(x, 374761393) ^ Math.imul(y, 668265263) ^ Math.imul(seed, 1442695041);
  h = Math.imul(h ^ (h >>> 13), 1274126177);
  h = Math.imul(h ^ (h >>> 15), 2246822519);
  return ((h ^ (h >>> 16)) >>> 0) / 4294967296;
};

const inside = (shape: Pt[], x: number, y: number) => {
  let hit = false;
  for (let i = 0, j = shape.length - 1; i < shape.length; j = i++) {
    const [xi, yi] = shape[i];
    const [xj, yj] = shape[j];
    if (yi > y !== yj > y && x < ((xj - xi) * (y - yi)) / (yj - yi) + xi) hit = !hit;
  }
  return hit;
};

const pick = (mix: Mix, u: number) => {
  const total = mix.reduce((a, b) => a + b, 0);
  let left = u * total;
  for (let i = 0; i < mix.length; i++) {
    left -= mix[i];
    if (left < 0) return i;
  }
  return mix.length - 1;
};

const CELL = 2;

const buildRaster = () => {
  const paths = grays.map(() => [] as string[]);
  const lands = [mainland, ...islands];
  for (let y = 344; y < 926; y += CELL) {
    let run = -1;
    let start = 0;
    for (let x = 430; x < 1130; x += CELL) {
      const cx = x >> 2;
      const cy = y >> 2;
      const ex = x + (hash(cx, cy, 1) - 0.5) * 4;
      const ey = y + (hash(cx, cy, 2) - 0.5) * 4;
      let tone = -1;
      if (lands.some((land) => inside(land, ex, ey))) {
        let mix = base;
        const jx = hash(x, y, 3) + hash(cx, cy, 4) - 1;
        const jy = hash(x, y, 5) + hash(cx, cy, 6) - 1;
        for (let i = patches.length - 1; i >= 0; i--) {
          const p = patches[i];
          if (inside(p.shape, x + jx * p.soft, y + jy * p.soft)) {
            mix = p.mix;
            break;
          }
        }
        const u = hash(x, y, 7) < 0.5 ? hash(cx, cy, 8) : hash(x, y, 9);
        tone = pick(mix, u);
      }
      if (tone !== run) {
        if (run >= 0) paths[run].push(`M${start} ${y}H${x}v2H${start}z`);
        run = tone;
        start = x;
      }
    }
  }
  return paths.map((p) => p.join(''));
};

const raster = buildRaster();

const ChinaMap = () => (
  <MapSvg viewBox="374 141 806 843" preserveAspectRatio="xMinYMin meet" role="img" aria-label="Mosaic raster">
    {raster.map((d, i) => (
      <path key={grays[i]} d={d} fill={grays[i]} />
    ))}
    <path d="M1047 705h2v2h-2zM1021 832h2v2h-2zM1043 716h2v2h-2z" fill="#444" />
  </MapSvg>
);

/* ---------- content ---------- */

const menus = ['File', 'Edit', 'View', 'Bookmarks', 'Insert', 'Selection', 'Geoprocessing', 'Customize', 'Windows', 'Help'];

/* '|' is a separator, 'v' and 'V' are drop arrows (disabled, enabled), '*' marks a pressed tool. */
const Tools = ({ items, tight }: { items: string; tight?: boolean }) => (
  <>
    {items.split(' ').map((it, i) => {
      if (it === '|') return <Sep key={i} $tight={tight} />;
      if (it === 'v' || it === 'V') {
        return (
          <DropButton key={i} aria-label="More options">
            <Caret $dim={it === 'v'} />
          </DropButton>
        );
      }
      const on = it.startsWith('*');
      const muted = it.startsWith('~');
      const name = it.replace(/^[*~]/, '');
      return (
        <ToolButton key={i} $on={on} $muted={muted} aria-label={name}>
          <Icon name={name} />
        </ToolButton>
      );
    })}
  </>
);

const Overflow = () => (
  <More aria-label="Toolbar options">
    <Caret />
  </More>
);

type Node = { name: string; level: number; open?: boolean; leaf?: boolean; hot?: boolean };
const n = (level: number, names: string[]): Node[] => names.map((name) => ({ name, level }));
const toolTree: Node[] = [
  ...n(0, ['Geometric Network', 'Graph', 'Indexes', 'Joins', 'LAS Dataset', 'Layers and Table Views', 'Package', 'Photos', 'Projections and Transformations']),
  { name: 'Raster', level: 0, open: true },
  ...n(1, ['Mosaic Dataset', 'Ortho Mapping', 'Raster Catalog']),
  { name: 'Raster Dataset', level: 1, open: true },
  ...['Copy Raster', 'Create Random Raster', 'Create Raster Dataset', 'Download Rasters', 'Generate Raster From Raster Function', 'Mosaic', 'Mosaic To New Raster', 'Raster Catalog To Raster Dataset', 'Workspace To Raster Dataset'].map(
    (name) => ({ name, level: 2, leaf: true, hot: name === 'Mosaic To New Raster' })
  ),
  ...n(1, ['Raster Processing', 'Raster Properties']),
  ...n(0, ['Relationship Classes', 'Sampling', 'Subtypes', 'Table', 'Tile Cache']),
];

const Toggle = ({ open, label }: { open?: boolean; label: string }) => (
  <Expander aria-label={`${open ? 'Collapse' : 'Expand'} ${label}`}>
    <svg width="8" height="8" viewBox="0 0 8 8">
      <path d={open ? 'M0 4h8' : 'M0 4h8M4 0v8'} stroke="#2f4468" strokeWidth="1.200" />
    </svg>
  </Expander>
);

const PaneButtons = () => (
  <>
    <button aria-label="Maximize pane"><Icon name="paneMax" size={13} /></button>
    <button aria-label="Close pane"><Icon name="paneClose" size={13} /></button>
  </>
);

const Toc = () => (
  <TocPane>
    <PaneHead>
      <PaneTitle>Table Of Contents</PaneTitle>
      <PaneButtons />
    </PaneHead>
    <TocTools>
      <Tools items="*listDrawing listSource listVisible listSelection | options" />
    </TocTools>
    <TocTree>
      <TocRow $indent={12}>
        <Toggle open label="Layers" />
        <LayersIconBox><Icon name="layers" /></LayersIconBox>
        <LayersName>Layers</LayersName>
      </TocRow>
      <TocRow $indent={37}>
        <Toggle open label="Mosaic" />
        <CheckWrap>
          <Check type="checkbox" id="mosaic" defaultChecked />
          <svg width="11" height="11" viewBox="0 0 11 11">
            <path d="M1 5l3 4 6-7" fill="none" stroke="#000" strokeWidth="2.200" />
          </svg>
        </CheckWrap>
        <LayerName htmlFor="mosaic">Mosaic</LayerName>
      </TocRow>
      <TocRow $indent={112}>Value</TocRow>
      <Legend>
        <Ramp />
        <LegendText>
          <span>High : 99</span>
          <span>Low : 11</span>
        </LegendText>
      </Legend>
    </TocTree>
  </TocPane>
);

const Toolbox = () => (
  <ToolboxPane>
    <ToolboxHead>
      <PaneTitle>ArcToolbox</PaneTitle>
      <PaneButtons />
    </ToolboxHead>
    <TreeBox>
      <Tree>
        {toolTree.map((t) => (
          <TreeRow key={t.name} $level={t.level}>
            {!t.leaf && <Toggle open={t.open} label={t.name} />}
            <RowIcon $leaf={t.leaf}><Icon name={t.leaf ? 'tool' : 'toolset'} size={22} /></RowIcon>
            <RowLabel $hot={t.hot}>{t.name}</RowLabel>
          </TreeRow>
        ))}
      </Tree>
      <VScroll>
        <ScrollButton aria-label="Scroll up"><Icon name="chevUp" size={12} /></ScrollButton>
        <Thumb />
        <ScrollButton aria-label="Scroll down"><Icon name="chevDown" size={12} /></ScrollButton>
      </VScroll>
    </TreeBox>
    <Tabs>
      <Tab $active><Icon name="toolboxWin" />ArcToolbox</Tab>
      <Tab><Icon name="catalogWin" />Catalog</Tab>
    </Tabs>
  </ToolboxPane>
);

export default function App() {
  return (
    <Window>
      <GlobalStyle />
      <TitleBar>
        <Icon name="arcmap" size={22} />
        <TitleText>批量拼接 - ArcMap</TitleText>
        <CaptionButton aria-label="Minimize"><Icon name="winMin" size={16} /></CaptionButton>
        <CaptionButton aria-label="Restore"><Icon name="winRestore" size={16} /></CaptionButton>
        <CaptionButton aria-label="Close"><Icon name="winClose" size={16} /></CaptionButton>
      </TitleBar>
      <MenuBar>
        {menus.map((m) => (
          <MenuButton key={m}>{m}</MenuButton>
        ))}
      </MenuBar>
      <ToolRow>
        <ToolBar>
          <Tools items="zoomIn zoomOut hand globe | zoomInFixed zoomOutFixed | back forward | selectFeatures v clearSelection | pointer | *info lightning popup | measure | find route goXY | time | viewer" />
          <Overflow />
        </ToolBar>
        <ToolBar>
          <Tools tight items="newDoc open save print | cut copy paste remove | undo redo | addData V |" />
          <Combo $wide>
            <Select aria-label="Map scale" disabled><option /></Select>
            <Icon name="chevThinDown" size={13} />
          </Combo>
          <Tools items="| *editorBar | tocWin catalogWin searchWin toolboxWin pythonWin | model" />
          <Overflow />
        </ToolBar>
      </ToolRow>
      <ToolRow $indent>
        <ToolBar>
          <WordButton>Editor<Caret /></WordButton>
          <Tools tight items="| editTool editAnno | line arc trace v pointTool | editVertices reshape cutPoly split rotate | attributes sketchProps | createFeatures" />
          <Overflow />
        </ToolBar>
        <ToolBar>
          <Tools items="pageZoomIn pageZoomOut pagePan pageFull pageOne | pageIn pageOut | pageBack pageForward" />
          <Combo>
            <Select aria-label="Page zoom" disabled><option>100%</option></Select>
            <Icon name="chevThinDown" size={13} />
          </Combo>
          <Tools items="| ~draft focus changeLayout dataDriven" />
          <Overflow />
        </ToolBar>
        <ToolBar>
          <AnalystButton>Geostatistical Analyst<Caret /></AnalystButton>
          <Tools items="geostat" />
          <Overflow />
        </ToolBar>
      </ToolRow>
      <Workspace>
        <LeftSide>
          <DataFrame>
            <Toc />
            <MapView>
              <ChinaMap />
              <ScaleTip role="tooltip">1:47,834,949</ScaleTip>
              <Cursor width="36" height="30" viewBox="0 0 36 30">
                <path d="M1 3v20l5-4 4 8 4-2-4-7h6z" fill="#fff" stroke="#111" />
                <circle cx="24" cy="11" r="10" fill="#000" stroke="#fff" />
                <path d="M23 4h3v3h-3zM21 9h5v7h2v2h-7v-2h2v-5h-2z" fill="#fff" />
              </Cursor>
            </MapView>
            <MicMeter />
          </DataFrame>
          <ViewBar>
            <ViewButton $on aria-label="Data view"><Icon name="dataView" size={12} /></ViewButton>
            <ViewButton aria-label="Layout view"><Icon name="layoutView" size={12} /></ViewButton>
            <Sep />
            <ViewButton aria-label="Refresh"><Icon name="refresh" size={12} /></ViewButton>
            <ViewButton aria-label="Pause drawing"><Icon name="pause" size={10} /></ViewButton>
            <ViewButton aria-label="Scroll left"><Icon name="chevLeft" size={12} /></ViewButton>
            <HTrack />
          </ViewBar>
        </LeftSide>
        <Toolbox />
      </Workspace>
      <StatusBar />
      <TaskBar>
        <TaskButtons>
          <TaskButton aria-label="Start"><Icon name="start" size={22} /></TaskButton>
          <TaskButton $open aria-label="File Explorer"><Icon name="explorer" /></TaskButton>
          <TaskButton aria-label="Edge"><Icon name="edge" /></TaskButton>
          <TaskButton $active aria-label="ArcMap"><Icon name="arcmap" size={22} /></TaskButton>
          <TaskButton aria-label="Acrobat"><Icon name="acrobat" /></TaskButton>
          <TaskButton $open aria-label="FileZilla"><Icon name="filezilla" size={22} /></TaskButton>
          <TaskButton $open aria-label="Recorder"><Icon name="recorder" /></TaskButton>
        </TaskButtons>
        <Tray>
          <TrayButton aria-label="Show hidden icons"><Icon name="chevTray" size={17} /></TrayButton>
          <TrayButton aria-label="Microphone"><Icon name="mic" size={21} /></TrayButton>
          <Clock>20:04</Clock>
          <TrayButton $wide aria-label="Notifications"><Icon name="notify" size={22} /></TrayButton>
        </Tray>
        <ShowDesktop aria-label="Show desktop" />
      </TaskBar>
    </Window>
  );
}
